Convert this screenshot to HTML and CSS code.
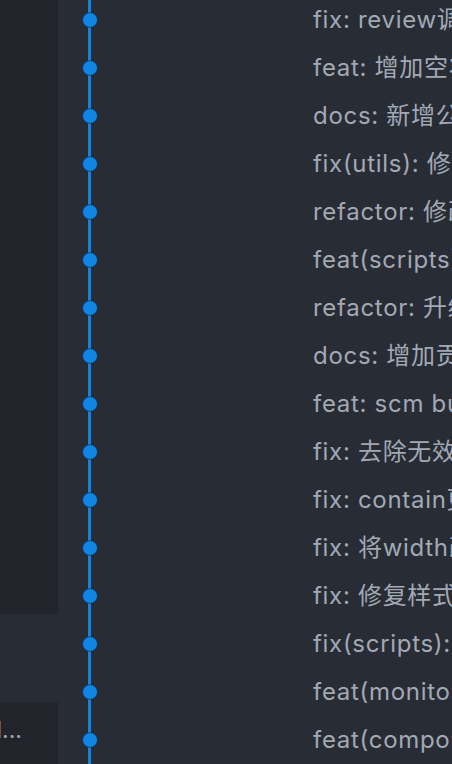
FILE: index.html
```html
<!DOCTYPE html>
<html>
<head>
<meta charset="utf-8">
<link rel="stylesheet" href="styles.css">
</head>
<body>
<div class="app">
  <aside class="side">
    <div class="panel panel-top"></div>
    <div class="gap"></div>
    <div class="panel panel-bottom">
      <div class="trunc"><span>detail...</span></div>
    </div>
  </aside>
  <main class="log">
    <ul class="commits">
      <li class="commit"><span class="graph"><i class="dot"></i></span><span class="msg">fix: review调整代码结构</span></li>
      <li class="commit"><span class="graph"><i class="dot"></i></span><span class="msg">feat: 增加空状态组件</span></li>
      <li class="commit"><span class="graph"><i class="dot"></i></span><span class="msg">docs: 新增公共组件文档</span></li>
      <li class="commit"><span class="graph"><i class="dot"></i></span><span class="msg">fix(utils): 修复工具函数</span></li>
      <li class="commit"><span class="graph"><i class="dot"></i></span><span class="msg">refactor: 修改目录结构</span></li>
      <li class="commit"><span class="graph"><i class="dot"></i></span><span class="msg">feat(scripts): 新增脚本</span></li>
      <li class="commit"><span class="graph"><i class="dot"></i></span><span class="msg">refactor: 升级依赖版本</span></li>
      <li class="commit"><span class="graph"><i class="dot"></i></span><span class="msg">docs: 增加贡献指南</span></li>
      <li class="commit"><span class="graph"><i class="dot"></i></span><span class="msg">feat: scm build 构建</span></li>
      <li class="commit"><span class="graph"><i class="dot"></i></span><span class="msg">fix: 去除无效代码</span></li>
      <li class="commit"><span class="graph"><i class="dot"></i></span><span class="msg">fix: contain更新逻辑</span></li>
      <li class="commit"><span class="graph"><i class="dot"></i></span><span class="msg">fix: 将width改为百分比</span></li>
      <li class="commit"><span class="graph"><i class="dot"></i></span><span class="msg">fix: 修复样式问题</span></li>
      <li class="commit"><span class="graph"><i class="dot"></i></span><span class="msg">fix(scripts): 修复脚本</span></li>
      <li class="commit"><span class="graph"><i class="dot"></i></span><span class="msg">feat(monitor): 新增监控</span></li>
      <li class="commit"><span class="graph"><i class="dot"></i></span><span class="msg">feat(components): 新增组件</span></li>
    </ul>
  </main>
</div>
</body>
</html>
```

FILE: styles.css
```css
html, body {
  margin: 0;
  padding: 0;
  background: #282c34;
  overflow: hidden;
}
.app {
  display: flex;
  width: 452px;
  height: 764px;
  overflow: hidden;
  font-family: Inter, "Noto Sans CJK SC", sans-serif;
}
.side {
  width: 58px;
  flex: none;
  display: flex;
  flex-direction: column;
}
.panel {
  background: #21252b;
}
.panel-top {
  height: 614px;
}
.gap {
  height: 88px;
}
.panel-bottom {
  flex: 1;
  padding-top: 14px;
}
.trunc {
  display: flex;
  justify-content: flex-end;
  overflow: hidden;
  padding-right: 36px;
  font-size: 23px;
  line-height: 28px;
  color: #a0a6b2;
  white-space: nowrap;
}
.log {
  flex: 1;
  min-width: 0;
  overflow: hidden;
}
.commits {
  list-style: none;
  margin: -4px 0 0 0;
  padding: 0;
}
.commit {
  display: flex;
  align-items: center;
  height: 48px;
}
.graph {
  position: relative;
  width: 64px;
  height: 48px;
  flex: none;
  display: flex;
  align-items: center;
  justify-content: center;
}
.graph::before {
  content: "";
  position: absolute;
  left: 30px;
  top: 0;
  bottom: 0;
  width: 3px;
  background: #0f84e0;
}
.dot {
  position: relative;
  width: 14px;
  height: 14px;
  border-radius: 50%;
  background: #0f86e3;
  box-shadow: 0 0 0 1px rgba(16, 60, 100, 0.7);
  margin-left: -1px;
}
.msg {
  margin-left: 191px;
  white-space: nowrap;
  font-size: 24px;
  line-height: 28px;
  letter-spacing: 0.7px;
  color: #a2a9b5;
}
```
